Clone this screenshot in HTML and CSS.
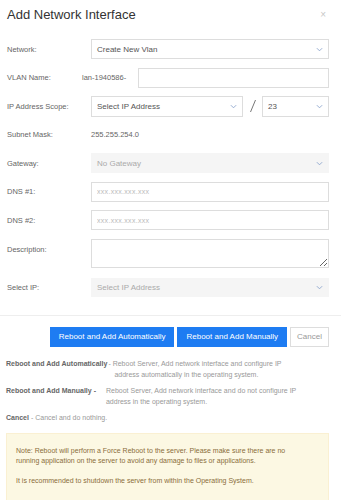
FILE: index.html
```html
<!DOCTYPE html>
<html lang="en">
<head>
    <meta charset="UTF-8">
    <meta name="viewport" content="width=device-width, initial-scale=1.0">
    <title>Add Network Interface</title>
    <link rel="stylesheet" href="styles.css">
</head>
<body>
    <div class="modal">
        <div class="modal-header">
            <h1>Add Network Interface</h1>
            <span class="close">&times;</span>
        </div>

        <div class="modal-body">
            <div class="form-row">
                <label>Network:</label>
                <div class="select">
                    <span>Create New Vlan</span>
                    <svg class="chevron" viewBox="0 0 8 5"><polyline points="1,1 4,4 7,1"/></svg>
                </div>
            </div>
            <div class="form-row vlan-row">
                <label>VLAN Name:</label>
                <span class="prefix">lan-1940586-</span>
                <input type="text" class="input">
            </div>
            <div class="form-row">
                <label>IP Address Scope:</label>
                <div class="select ip-select">
                    <span>Select IP Address</span>
                    <svg class="chevron" viewBox="0 0 8 5"><polyline points="1,1 4,4 7,1"/></svg>
                </div>
                <svg class="slash" viewBox="0 0 8 14"><line x1="6.5" y1="1" x2="1.5" y2="13"/></svg>
                <div class="select cidr-select">
                    <span>23</span>
                    <svg class="chevron" viewBox="0 0 8 5"><polyline points="1,1 4,4 7,1"/></svg>
                </div>
            </div>
            <div class="form-row">
                <label>Subnet Mask:</label>
                <span class="value">255.255.254.0</span>
            </div>
            <div class="form-row">
                <label>Gateway:</label>
                <div class="select disabled">
                    <span>No Gateway</span>
                    <svg class="chevron" viewBox="0 0 8 5"><polyline points="1,1 4,4 7,1"/></svg>
                </div>
            </div>
            <div class="form-row">
                <label>DNS #1:</label>
                <input type="text" class="input" placeholder="xxx.xxx.xxx.xxx">
            </div>
            <div class="form-row">
                <label>DNS #2:</label>
                <input type="text" class="input" placeholder="xxx.xxx.xxx.xxx">
            </div>
            <div class="form-row desc-row">
                <label>Description:</label>
                <textarea class="textarea"></textarea>
            </div>
            <div class="form-row last-row">
                <label>Select IP:</label>
                <div class="select disabled">
                    <span>Select IP Address</span>
                    <svg class="chevron" viewBox="0 0 8 5"><polyline points="1,1 4,4 7,1"/></svg>
                </div>
            </div>
        </div>

        <div class="modal-footer">
            <div class="buttons">
                <button class="btn btn-primary">Reboot and Add Automatically</button>
                <button class="btn btn-primary">Reboot and Add Manually</button>
                <button class="btn btn-default">Cancel</button>
            </div>

            <div class="help">
                <div class="help-item">
                    <b>Reboot and Add Automatically</b>
                    <span class="help-text hang">- Reboot Server, Add network interface and configure IP address automatically in the operating system.</span>
                </div>
                <div class="help-item">
                    <b>Reboot and Add Manually -</b>
                    <span class="help-text manual">Reboot Server, Add network interface and do not configure IP address in the operating system.</span>
                </div>
                <div class="help-item">
                    <b>Cancel</b><span class="help-text">&nbsp;- Cancel and do nothing.</span>
                </div>
            </div>

            <div class="note">
                <p>Note: Reboot will perform a Force Reboot to the server. Please make sure there are no running application on the server to avoid any damage to files or applications.</p>
                <p>It is recommended to shutdown the server from within the Operating System.</p>
            </div>
        </div>
    </div>
</body>
</html>
```

FILE: styles.css
```css
body {
    margin: 0;
    background: #fff;
    font-family: "Liberation Sans", Arial, sans-serif;
    color: #666;
}
.modal {
    width: 341px;
}
.modal-header {
    display: flex;
    justify-content: space-between;
    align-items: center;
    height: 28px;
    padding: 0 15px 2px 7px;
}
h1 {
    margin: 0;
    font-size: 13px;
    font-weight: normal;
    color: #333;
}
.close {
    font-size: 10px;
    color: #c8c8c8;
}
.modal-body {
    padding: 9px 12px 0 7px;
}
.form-row {
    display: flex;
    align-items: center;
    height: 20px;
    margin-bottom: 8.5px;
}
.form-row label {
    width: 84px;
    flex-shrink: 0;
    font-size: 7.5px;
    color: #666;
}
.vlan-row label {
    width: 75px;
}
.prefix {
    font-size: 7.5px;
    color: #666;
    width: 56px;
    flex-shrink: 0;
}
.value {
    font-size: 7.5px;
    color: #666;
}
.select {
    flex: 1;
    height: 100%;
    box-sizing: border-box;
    border: 1px solid #ddd;
    display: flex;
    align-items: center;
    justify-content: space-between;
    padding: 0 5px 0 5px;
    font-size: 8px;
    color: #555;
}
.select.disabled {
    background: #f5f5f5;
    border-color: #f5f5f5;
    color: #aaa;
}
.ip-select {
    flex: 0 0 152px;
    height: 21px;
}
.cidr-select {
    flex: 1;
    height: 21px;
}
.chevron {
    width: 7px;
    height: 5px;
    fill: none;
    stroke: #8aa4cc;
    stroke-width: 1;
}
.slash {
    width: 8px;
    height: 14px;
    margin: 0 5.5px;
    stroke: #777;
    stroke-width: 1;
}
.input {
    flex: 1;
    min-width: 0;
    height: 100%;
    box-sizing: border-box;
    border: 1px solid #ddd;
    padding: 0 5px;
    font-family: inherit;
    font-size: 7px;
    color: #555;
    outline: none;
}
.input::placeholder {
    color: #bbb;
    letter-spacing: 0.3px;
}
.desc-row {
    height: 29px;
    align-items: flex-start;
    margin-bottom: 10px;
}
.desc-row label {
    margin-top: 6px;
}
.textarea {
    flex: 1;
    height: 29px;
    box-sizing: border-box;
    border: 1px solid #ddd;
    resize: vertical;
    margin: 0;
    outline: none;
}
.last-row {
    margin-bottom: 0;
    height: 19px;
}
.modal-footer {
    margin-top: 18px;
    border-top: 1px solid #eee;
    padding: 11px 12px 0 6px;
}
.buttons {
    display: flex;
    justify-content: flex-end;
    gap: 3px;
}
.btn {
    height: 20px;
    padding: 0 8px;
    border: 1px solid transparent;
    font-family: inherit;
    font-size: 8px;
    cursor: pointer;
}
.btn-primary {
    background: #1e7cf2;
    color: #fff;
}
.btn-default {
    background: #fff;
    border-color: #ddd;
    color: #999;
    padding: 0 6px;
}
.help {
    margin-top: 11px;
    font-size: 7px;
    line-height: 11px;
}
.help-item {
    display: flex;
    margin-bottom: 5px;
}
.help-item b {
    color: #666;
    white-space: nowrap;
    flex-shrink: 0;
}
.help-text {
    color: #999;
}
.hang {
    margin-left: 1px;
    padding-left: 6px;
    text-indent: -6px;
    padding-right: 22px;
}
.manual {
    margin-left: 10px;
    padding-right: 14px;
}
.note {
    margin-top: 10px;
    background: #fcf8e3;
    border: 1px solid #faf0d2;
    padding: 12px 24px 14px 9px;
    color: #8a6d3b;
    font-size: 7px;
    line-height: 10px;
}
.note p {
    margin: 0 0 10px 0;
}
.note p:last-child {
    margin-bottom: 0;
}
```
